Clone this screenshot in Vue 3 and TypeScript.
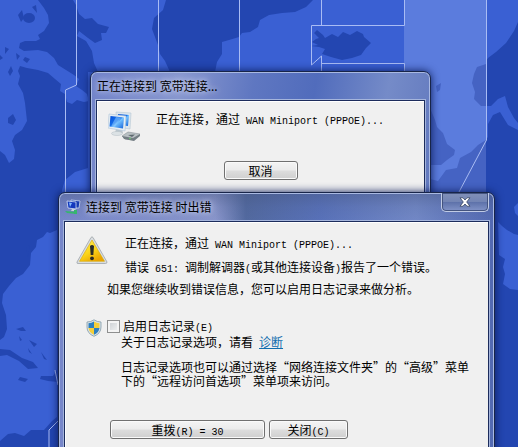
<script setup lang="ts">
import { ref } from 'vue'

const device = 'WAN Miniport (PPPOE)...'
const countdown = ref(30)
const logging = ref(false)
</script>

<template>
  <main class="desktop">
    <svg class="map" viewBox="0 0 518 447" preserveAspectRatio="xMidYMid slice" aria-hidden="true">
      <rect width="518" height="447" fill="#2346b1" />
      <g fill="#3a60d3">
        <path d="M0 0H38L44 8 48 15 49 23 44 31 38 35 40 39 36 41 25 41 20 43 19 48 24 51 38 50 47 52 54 58 58 65 66 70 74 75 79 79 76 86 82 90 87 94 89 101 84 102 77 100 72 104 67 102 65 94 60 91 61 84 55 79 48 73 38 70 27 68 20 66 18 71 20 76 18 84 23 93 25 103 26 112 27 121 22 130 15 135 12 141 15 150 14 159 9 163 5 155 0 151Z" />
        <path d="M73 0 76 5 79 14 85 19 92 18 98 24 109 27 106 33 101 33 102 40 95 43 88 38 79 31 77 36 86 41 92 51 94 63 98 72H170L165 61 160 54 158 45 155 37 152 29 154 18 163 10 166 0Z" />
        <path d="M62 190 65 180 75 172 88 168V192H62Z" />
        <path d="M215 72 217 62 222 54 222 42 229 40 239 37 242 33 250 32 258 27 260 20 269 15 282 13 295 12 306 7 313 0H518V22L514 31 506 43 496 52 488 58 485 63 476 67 473 75 472 82 475 91 474 99 483 106 491 106 498 99 505 96 508 107 514 118 518 123V130L508 125 500 112 493 115 488 124 488 137 481 146 470 154 460 168 450 174 435 181 432 192H88V72Z" />
        <path d="M57 230 50 233 47 232 43 237 37 240 36 247 31 253 30 265 23 274 16 278 9 286 3 294 2 303 6 315 7 329 4 337 0 340V441L8 434 15 433 24 436 31 430 44 430 52 421 57 417Z" />
        <path d="M498 222 502 226 507 230 514 234 518 235V290L510 289 503 284 505 274 503 267 505 259 499 255Z" />
        <path d="M518 203 514 207 515 213 518 216Z" />
      </g>
      <g fill="#2346b1">
        <ellipse cx="29" cy="18" rx="6" ry="5" />
        <path d="M22 10 18 15 21 22 24 18ZM37 13 32 7 36 5ZM5 47 9 49 5 54ZM0 55 3 58 0 60ZM8 72 11 66 13 71 10 76ZM16 53 20 56 17 60ZM23 60 25 57 30 59 27 63ZM8 118 13 114 16 120 13 125 8 123Z" />
        <path d="M311 46 318 45 312 42 316 39 319 38 314 33 317 30 323 35 325 38 332 34 338 37 343 32 350 35 357 31 363 34 364 37 371 43 366 48 361 55 352 58 342 60 331 57 322 54 325 49 319 47Z" />
        <path d="M0 349 10 350 22 358 33 362 38 368 28 369 19 361 7 355 0 356ZM20 377 28 379 25 382 18 380ZM41 376 53 376 58 368V382L48 381 40 379ZM16 329 23 327 26 331 21 331ZM19 336 22 340 20 341ZM29 340 37 344 34 347ZM28 348 32 354 29 352ZM41 352 47 360 44 359ZM26 247 30 245 28 257Z" />
      </g>
      <path d="M404 0H486V192H404Z" fill="#5b7cdd" />
      <g fill="#4563c3">
        <path d="M486 64 477 67 474 74 472 83 475 92 474 99 481 106 486 106ZM436 86 441 83 440 90 437 92ZM430 108 435 120 437 127 443 133 447 144 455 150 454 155 447 160 441 165H430ZM486 140V192H430V179L438 181 446 170 457 168 460 158 471 152 478 145Z" />
      </g>
      <path d="M486 141H518V192H486Z" fill="#2346b1" />
      <g fill="none" stroke="#a9bcf4" stroke-width="1">
        <path d="M76.5 0V85L65.500 90V192M158.500 0V72M239.500 0V72M321.500 0V25M404.500 0V25.500H311.500V65L321.500 56V72M321.500 63.500H404.500V72M486.500 0V140L459 192M55 370 58 385M58 421 49 430V447" />
      </g>
    </svg>

    <section class="window connecting" aria-labelledby="connecting-title">
      <header class="titlebar">
        <h1 id="connecting-title" class="title">正在连接到 宽带连接...</h1>
      </header>
      <div class="client">
        <div class="status">
          <svg class="network" viewBox="0 0 32 32" aria-hidden="true">
            <defs>
              <linearGradient id="screen" x1="0" y1="0" x2="1" y2="1">
                <stop offset="0" stop-color="#0650d8" />
                <stop offset=".45" stop-color="#1570ec" />
                <stop offset=".55" stop-color="#72c1ff" />
                <stop offset="1" stop-color="#1262da" />
              </linearGradient>
            </defs>
            <path d="M8 1 23 2 22 18 9 16Z" fill="#dce6ed" stroke="#b7c7d3" stroke-width=".6" />
            <path d="M10 3 21 4 20 15 10 14Z" fill="url(#screen)" />
            <path d="M8 18h6l1 4H7Z" fill="#bac5cc" />
            <ellipse cx="9" cy="22.500" rx="5.500" ry="2" fill="#dce2e5" stroke="#b5bec4" stroke-width=".5" />
            <path d="M1 3 18 5 17 20 0 17Z" fill="#e4edf3" stroke="#b0c5d6" stroke-width=".6" />
            <path d="M2.500 5 16 6.500 15 17.500 1.500 15.500Z" fill="url(#screen)" />
            <path d="M8 6 13 6.500 7 16 3 15.500Z" fill="#8ccbff" opacity=".55" />
            <path d="M14 25 20 21 32 23 26 29 17 28Z" fill="#b9c0c3" stroke="#8b9499" stroke-width=".6" />
            <path d="M14 25 25 27 32 23V25L26 30 16 28Z" fill="#747e84" />
            <path d="M20 24 27 23.500 24 26Z" fill="#5d686e" />
            <circle cx="22" cy="27.500" r=".8" fill="#6bd36a" />
          </svg>
          <p class="status-text">正在连接，通过<span class="half">&nbsp;{{ device }}</span></p>
        </div>
        <button type="button" class="button cancel">取消</button>
      </div>
    </section>

    <section class="window failure" aria-labelledby="failure-title">
      <header class="titlebar">
        <svg class="small-network" viewBox="0 0 16 16" aria-hidden="true">
          <path d="M6 1 15 2 14 9 6 9Z" fill="#173bb1" stroke="#c7d5ef" stroke-width=".8" />
          <path d="M2 2 11 3 11 10 3 9Z" fill="#1338bd" stroke="#d4e0f4" stroke-width=".8" />
          <path d="M4 3.500 7 4 5 8Z" fill="#82b9ff" />
          <path d="M7 10h3l1 2H6Z" fill="#c7d1da" />
          <path d="M0 12 12 13V15L2 14ZM9 11h3v4H9Z" fill="#35b66d" />
        </svg>
        <h2 id="failure-title" class="title">连接到 宽带连接 时出错</h2>
        <button type="button" class="close" aria-label="关闭">
          <svg viewBox="0 0 12 10" aria-hidden="true">
            <path d="M1 .8H4L6 3 8 .8H11L7.700 5 11 9.200H8L6 7 4 9.200H1L4.300 5Z" fill="#fff" stroke="#33415f" stroke-width=".8" />
          </svg>
        </button>
      </header>
      <div class="client">
        <div class="message">
          <svg class="warning" viewBox="0 0 32 28" aria-hidden="true">
            <defs>
              <linearGradient id="amber" x1="0" y1="0" x2=".6" y2="1">
                <stop offset="0" stop-color="#fff05b" />
                <stop offset=".6" stop-color="#fbd51a" />
                <stop offset="1" stop-color="#eaa400" />
              </linearGradient>
            </defs>
            <path d="M15 1.500Q16 0 17 1.500L31 26Q31 27.500 29.500 27.500H2Q.5 27.500 1 26Z" fill="#d9dde0" stroke="#9ea4a9" stroke-width=".8" />
            <path d="M16 4 28.500 25.300H3.500Z" fill="url(#amber)" stroke="#d9a700" stroke-width=".6" />
            <path d="M14 10Q16 8 18 10L17.300 19H14.700Z" fill="#292b27" />
            <circle cx="16" cy="22.300" r="1.900" fill="#292b27" />
          </svg>
          <div class="message-text">
            <p>正在连接，通过<span class="half">&nbsp;{{ device }}</span></p>
            <p>错误<span class="half">&nbsp;651:&nbsp;</span>调制解调器<span class="half">(</span>或其他连接设备<span class="half">)</span>报告了一个错误。</p>
          </div>
        </div>
        <p class="advice">如果您继续收到错误信息，您可以启用日志记录来做分析。</p>

        <div class="logging">
          <svg class="shield" viewBox="0 0 16 18" aria-hidden="true">
            <path d="M8 .8Q11 3 15 3V8Q15 14.500 8 17.300 1 14.500 1 8V3Q5 3 8 .8Z" fill="#d9e3e8" stroke="#8299a7" stroke-width=".8" />
            <path d="M8 2.500V9H2.500V4.300Q5.500 4 8 2.500ZM8 9H13.500Q13 13.500 8 15.800Z" fill="#2d7fc0" />
            <path d="M8 2.500Q10.500 4 13.500 4.300V9H8ZM2.500 9H8V15.800Q3 13.500 2.500 9Z" fill="#f5cf3a" />
          </svg>
          <div class="options">
            <label class="check"><input v-model="logging" type="checkbox" /><span>启用日志记录<span class="half">(E)</span></span></label>
            <div class="details">
              <p class="help">关于日志记录选项，请看<span class="half">&nbsp;</span><a href="#diagnose">诊断</a></p>
              <p class="note">日志记录选项也可以通过选择“网络连接文件夹”的“高级”菜单<br />下的“远程访问首选项”菜单项来访问。</p>
            </div>
          </div>
        </div>

        <div class="actions">
          <button type="button" class="button redial">重拨<span class="half">(R) = {{ countdown }}</span></button>
          <button type="button" class="button dismiss">关闭<span class="half">(C)</span></button>
        </div>
      </div>
    </section>
  </main>
</template>

<style>
body {
  margin: 0;
}
</style>

<style scoped>
.desktop {
  position: relative;
  min-height: 100vh;
  overflow: hidden;
  box-sizing: border-box;
  background: #2346b1;
  color: #000;
  font: 12px/16px "Noto Sans CJK SC", sans-serif;
}

.map {
  position: absolute;
  inset: 0;
  width: 100%;
  height: 100%;
}

p,
h1,
h2 {
  margin: 0;
  font-size: 12px;
  font-weight: 400;
}

p {
  white-space: nowrap;
}

.half {
  font-family: "Liberation Mono", monospace;
  font-size: 10px;
  line-height: 0;
  white-space: pre;
}

.window {
  position: absolute;
  box-sizing: border-box;
  padding: 0 5px 5px;
  border: 1px solid #182549;
  border-radius: 7px 7px 0 0;
  background: linear-gradient(100deg, #7183c9 0, #8796ce 25%, #5f77c1 45%, #516cbc 62%, #758bc8 82%, #6077bd 100%);
  box-shadow: inset 0 0 0 1px #a9b9e2, 0 0 8px #0b1c59;
}

.connecting {
  top: 71px;
  left: 90px;
  width: 341px;
}

.failure {
  top: 192px;
  left: 58px;
  width: 437px;
  background: linear-gradient(180deg, #44547e70 0, #44547e20 14px, transparent 28px), linear-gradient(90deg, #7787ca 0, #8995cb 36%, #52699f 43%, #5871b9 60%, #7288c6 82%, #5269b2 100%);
}

.titlebar {
  display: flex;
  height: 28px;
  align-items: center;
}

.connecting .titlebar {
  padding-left: 1px;
}

.title {
  text-shadow: 0 0 5px #d3daf3, 0 0 8px #c4ceee;
}

.small-network {
  width: 16px;
  height: 16px;
  margin: 0 5px 0 1px;
}

.close {
  display: flex;
  align-self: flex-start;
  align-items: center;
  justify-content: center;
  width: 48px;
  height: 19px;
  margin-left: auto;
  padding: 0;
  border: 1px solid #c0cbe5;
  border-top: 0;
  border-radius: 0 0 5px 5px;
  background: linear-gradient(#8190b8, #7284b4 50%, #5e72aa 52%, #8294c8);
  box-shadow: inset 0 0 0 1px #43537e;
}

.close svg {
  width: 12px;
  height: 10px;
}

.client {
  border: 1px solid #1c2c5c;
  background: #f0f0f0;
  box-shadow: 0 0 0 1px #a5b5dc, inset 1px 1px #fff;
}

.connecting .client {
  min-height: 120px;
  padding: 10px 11px;
  box-sizing: border-box;
}

.status {
  display: flex;
  gap: 16px;
  height: 50px;
}

.network {
  width: 32px;
  height: 32px;
}

.button {
  height: 19px;
  padding: 0;
  border: 1px solid #707070;
  border-radius: 3px;
  background: linear-gradient(#f4f4f4, #ebebeb 48%, #dddddd 52%, #cfcfcf);
  box-shadow: inset 0 0 0 1px #fafafa;
  color: #000;
  font: 12px/16px "Noto Sans CJK SC", sans-serif;
}

.cancel {
  display: block;
  width: 74px;
  margin: 0 auto;
}

.failure .client {
  padding: 9px 11px 10px;
}

.message {
  display: flex;
  gap: 17px;
}

.warning {
  width: 32px;
  height: 28px;
  margin-top: 5px;
}

.message p {
  line-height: 24px;
}

.advice {
  padding-left: 31px;
  line-height: 20px;
}

.logging {
  display: flex;
  gap: 5px;
  margin-top: 19px;
  padding-left: 10px;
}

.shield {
  flex: none;
  width: 16px;
  height: 18px;
  margin-top: 1px;
}

.check {
  display: flex;
  align-items: center;
  gap: 3px;
}

.check input {
  appearance: none;
  width: 13px;
  height: 13px;
  margin: 0;
  border: 1px solid #8e8f8f;
  background: linear-gradient(135deg, #c8ccd0, #f4f5f5);
  box-shadow: inset 0 0 0 2px #f4f4f4;
}

.check input:checked {
  background: #3a60d3;
}

.details {
  padding-left: 14px;
}

.help {
  line-height: 15px;
}

.help a {
  color: #0f6cae;
}

.note {
  margin-top: 11px;
  line-height: 14px;
}

.actions {
  display: flex;
  gap: 4px;
  margin-top: 32px;
  padding-left: 34px;
}

.redial {
  width: 155px;
}

.dismiss {
  width: 79px;
}
</style>
